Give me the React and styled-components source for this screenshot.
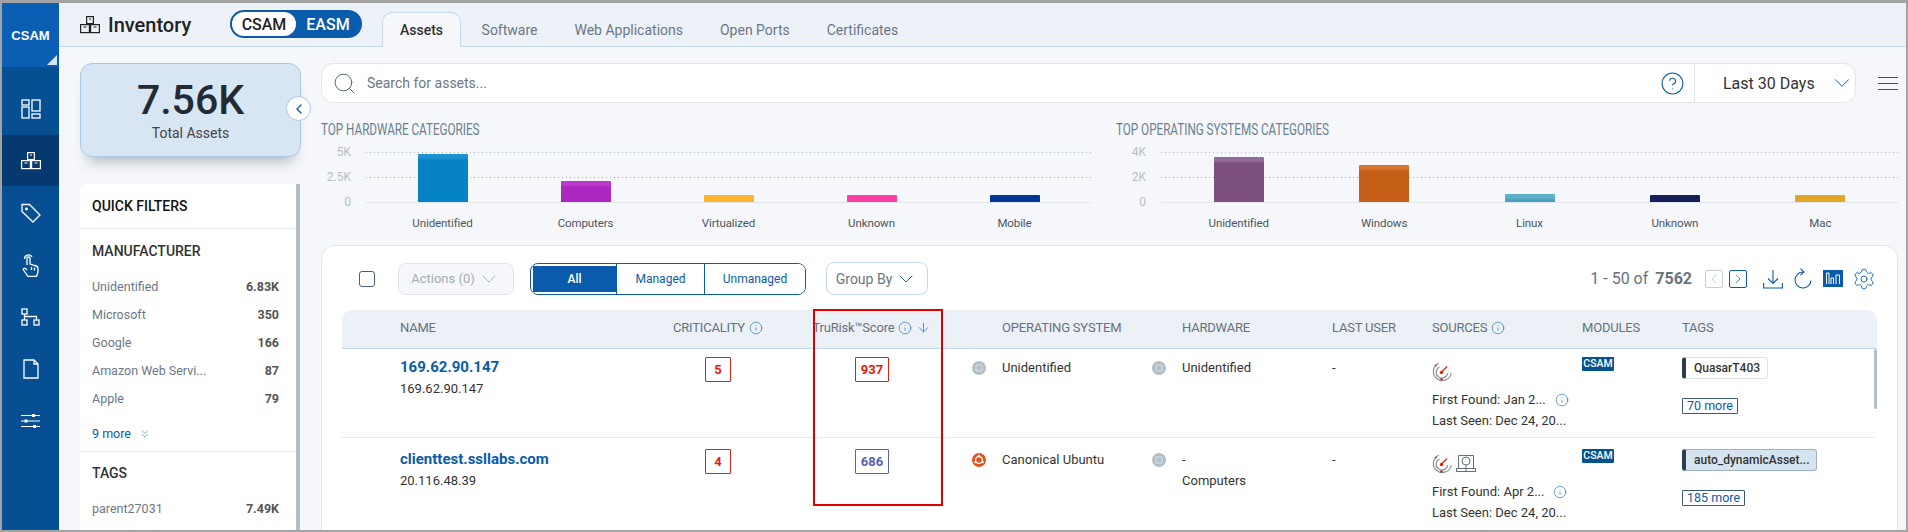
import styled, { createGlobalStyle } from 'styled-components';
import {
  ArrowDown,
  ChevronDown,
  ChevronLeft,
  ChevronRight,
  ChevronsDown,
  CircleHelp,
  Info,
  Search,
  Settings,
} from 'lucide-react';

const GlobalStyle = createGlobalStyle`
  * { box-sizing: border-box; }
  html, body { margin: 0; padding: 0; }
  body { font-family: Roboto, 'Liberation Sans', sans-serif; color: #333; background: #fff; }
`;

const hardware = [
  { label: 'Unidentified', height: 48, color: '#0683c4', top: '#1a92d0' },
  { label: 'Computers', height: 21, color: '#ac28c1', top: '#b93ccc' },
  { label: 'Virtualized', height: 7, color: '#fdb52f', top: '#fdb52f' },
  { label: 'Unknown', height: 7, color: '#ff3ea5', top: '#ff3ea5' },
  { label: 'Mobile', height: 7, color: '#023793', top: '#023793' },
];

const systems = [
  { label: 'Unidentified', height: 45, color: '#7d5080', top: '#946a97' },
  { label: 'Windows', height: 37, color: '#c55f17', top: '#d5732f' },
  { label: 'Linux', height: 8, color: '#4a9fbe', top: '#5fb0cc' },
  { label: 'Unknown', height: 7, color: '#151f59', top: '#151f59' },
  { label: 'Mac', height: 7, color: '#e1a626', top: '#e1a626' },
];

const manufacturers = [
  ['Unidentified', '6.83K'],
  ['Microsoft', '350'],
  ['Google', '166'],
  ['Amazon Web Servi...', '87'],
  ['Apple', '79'],
];

const IconBoxes = () => (
  <svg width='20' height='18' viewBox='0 0 20 18' fill='none' stroke='currentColor' strokeWidth='1.2'>
    <rect x='6.6' y='0.6' width='6.8' height='7' />
    <rect x='0.6' y='8.6' width='8.8' height='8' />
    <rect x='10.6' y='8.6' width='8.8' height='8' />
    <path d='M9 3h2M3.5 11h3M13.5 11h3' />
  </svg>
);

const IconDash = () => (
  <svg width='20' height='20' viewBox='0 0 20 20' fill='none' stroke='currentColor' strokeWidth='1.3'>
    <rect x='1' y='1' width='7' height='5' />
    <rect x='1' y='8' width='7' height='11' />
    <rect x='11' y='1' width='8' height='11' />
    <rect x='11' y='15' width='8' height='4' />
  </svg>
);

const IconTag = () => (
  <svg width='20' height='20' viewBox='0 0 20 20' fill='none' stroke='currentColor' strokeWidth='1.3'>
    <path d='M1 1.5h7.5L19 12l-7 7L1 8.5z' />
    <circle cx='5.5' cy='6' r='0.8' fill='currentColor' />
  </svg>
);

const IconHand = () => (
  <svg width='17' height='23' viewBox='0 0 17 23' fill='none' stroke='currentColor' strokeWidth='1.3'>
    <path d='M5 11V4.5a1.5 1.5 0 0 1 3 0V10l5 1.5c1.5.4 3 1.2 3 3V18l-1.5 4.5H6L1.5 16c-.8-1.2.8-2.5 2-1.5L5 16' />
    <path d='M2.5 5a4 4 0 0 1 7.5-2M9.500 13v3M12.500 13.500v3' />
  </svg>
);

const IconTree = () => (
  <svg width='20' height='18' viewBox='0 0 20 18' fill='none' stroke='currentColor' strokeWidth='1.3'>
    <rect x='1' y='1' width='5' height='5' />
    <rect x='1' y='12' width='5' height='5' />
    <rect x='13' y='12' width='5' height='5' />
    <path d='M3.5 6v6M3.5 8.500h12V12' />
  </svg>
);

const IconFile = () => (
  <svg width='16' height='20' viewBox='0 0 16 20' fill='none' stroke='currentColor' strokeWidth='1.3'>
    <path d='M1 1h10l4 4v14H1zM11 1v4h4' />
  </svg>
);

const IconSliders = () => (
  <svg width='20' height='16' viewBox='0 0 20 16' fill='currentColor' stroke='currentColor' strokeWidth='1'>
    <path d='M0 2.5h19M0 8h19M0 13.5h19' />
    <rect x='11' y='1' width='3' height='3' stroke='none' />
    <rect x='3.5' y='6.5' width='3' height='3' stroke='none' />
    <rect x='12' y='12' width='3' height='3' stroke='none' />
  </svg>
);

const IconRadar = () => (
  <svg width='20' height='20' viewBox='0 0 20 20' fill='none' stroke='#8b949c' strokeWidth='1.2'>
    <path d='M7 1.200A9 9 0 1 0 19.300 11' />
    <path d='M7.500 5A5.800 5.800 0 1 0 15.700 11' />
    <path d='M9.500 10 15 4.500' stroke='#e0200f' strokeWidth='1.2' />
    <circle cx='9.500' cy='10.500' r='1.700' fill='#e0200f' stroke='none' />
    <circle cx='9.500' cy='17.500' r='1.200' fill='#e0200f' stroke='none' />
    <circle cx='3.800' cy='3.500' r='1' fill='#e0200f' stroke='none' />
  </svg>
);

const IconScan = () => (
  <svg width='20' height='20' viewBox='0 0 20 20' fill='none' stroke='#66707a' strokeWidth='1'>
    <path d='M2.500 14.500V1.500h15v13' />
    <circle cx='10' cy='7' r='4' />
    <path d='M10 11v7' />
    <rect x='0.5' y='14.500' width='19' height='3' />
  </svg>
);

const IconDownload = () => (
  <svg width='20' height='20' viewBox='0 0 20 20' fill='none' stroke='currentColor' strokeWidth='1.1'>
    <path d='M10 1v13M5 9.500l5 5 5-5M0.600 14v5h18.800v-5' />
  </svg>
);

const IconRefresh = () => (
  <svg width='18' height='21' viewBox='0 0 18 21' fill='none' stroke='currentColor' strokeWidth='1.1'>
    <path d='M9 4a8 8 0 1 0 8 8.500' />
    <path d='M6.500 0.700 10 4l-3.500 3' />
  </svg>
);

const Gear = styled(Settings)`
  margin: -2px;
`;

const IconGlobe = () => (
  <svg width='14' height='14' viewBox='0 0 14 14'>
    <circle cx='7' cy='7' r='7' fill='#b3bfc6' />
    <path d='M4 4h6v6H4z' fill='none' stroke='#d8dfe3' strokeWidth='1' />
  </svg>
);

const IconUbuntu = () => (
  <svg width='14' height='14' viewBox='0 0 14 14'>
    <circle cx='7' cy='7' r='7' fill='#e2521d' />
    <circle cx='7' cy='7' r='3.4' fill='none' stroke='#fff' strokeWidth='1.2' />
    <circle cx='7' cy='2.6' r='1.1' fill='#fff' />
    <circle cx='3.2' cy='9.2' r='1.1' fill='#fff' />
    <circle cx='10.8' cy='9.2' r='1.1' fill='#fff' />
  </svg>
);

const IconBars = () => (
  <svg width='20' height='17' viewBox='0 0 20 17'>
    <rect width='20' height='17' fill='#0a5bab' />
    <path d='M3.500 14V3h2.500v11M8 14V8h2.500v6M13 14V5h3.500v9' fill='none' stroke='#fff' strokeWidth='1' />
  </svg>
);

const ChartBlock = ({ title, ticks, bars, wide }) => (
  <Chart $wide={wide}>
    <ChartTitle>{title}</ChartTitle>
    <ChartBody>
      <Axis>
        {ticks.map((tick) => (
          <span key={tick}>{tick}</span>
        ))}
      </Axis>
      <Plot>
        <GridLine $top={0} />
        <GridLine $top={25} />
        {bars.map((bar) => (
          <BarSlot key={bar.label}>
            <Bar $height={bar.height} $color={bar.color} $top={bar.top} />
          </BarSlot>
        ))}
      </Plot>
    </ChartBody>
    <Labels>
      {bars.map((bar) => (
        <span key={bar.label}>{bar.label}</span>
      ))}
    </Labels>
  </Chart>
);

const App = () => {
  return (
    <Frame>
      <GlobalStyle />
      <Sidebar>
        <Brand>CSAM</Brand>
        <NavItem $h={68} $pad={16}><IconDash /></NavItem>
        <NavItem $h={51} $active><IconBoxes /></NavItem>
        <NavItem $h={54}><IconTag /></NavItem>
        <NavItem $h={50}><IconHand /></NavItem>
        <NavItem $h={54}><IconTree /></NavItem>
        <NavItem $h={50}><IconFile /></NavItem>
        <NavItem $h={54}><IconSliders /></NavItem>
      </Sidebar>

      <Main>
        <TopBar>
          <PageTitle>
            <IconBoxes />
            <h1>Inventory</h1>
          </PageTitle>
          <Toggle>
            <ToggleOption $on>CSAM</ToggleOption>
            <ToggleOption>EASM</ToggleOption>
          </Toggle>
          <Tabs>
            <Tab $active>Assets</Tab>
            <Tab>Software</Tab>
            <Tab>Web Applications</Tab>
            <Tab>Open Ports</Tab>
            <Tab>Certificates</Tab>
          </Tabs>
        </TopBar>

        <Content>
          <LeftColumn>
            <TotalCard>
              <strong>7.56K</strong>
              <span>Total Assets</span>
              <Collapse>
                <ChevronLeft size={16} strokeWidth={2} />
              </Collapse>
            </TotalCard>

            <FilterPanel>
              <FilterHead>QUICK FILTERS</FilterHead>
              <FilterGroup>
                <GroupTitle>MANUFACTURER</GroupTitle>
                {manufacturers.map(([name, count]) => (
                  <FilterRow key={name}>
                    <span>{name}</span>
                    <b>{count}</b>
                  </FilterRow>
                ))}
                <MoreLink>
                  9 more <ChevronsDown size={12} strokeWidth={1} />
                </MoreLink>
              </FilterGroup>
              <FilterGroup>
                <GroupTitle>TAGS</GroupTitle>
                <FilterRow>
                  <span>parent27031</span>
                  <b>7.49K</b>
                </FilterRow>
              </FilterGroup>
            </FilterPanel>
          </LeftColumn>

          <RightColumn>
            <SearchRow>
              <SearchBox>
                <Search size={25} strokeWidth={0.9} color='#4b5a68' />
                <SearchText>Search for assets...</SearchText>
                <CircleHelp size={25} strokeWidth={1} color='#0a5bab' />
                <DateRange>
                  Last 30 Days
                  <ChevronDown size={26} strokeWidth={0.9} color='#0a5bab' />
                </DateRange>
              </SearchBox>
              <Burger>
                <i />
                <i />
                <i />
              </Burger>
            </SearchRow>

            <Charts>
              <ChartBlock title='TOP HARDWARE CATEGORIES' ticks={['5K', '2.5K', '0']} bars={hardware} />
              <ChartBlock title='TOP OPERATING SYSTEMS CATEGORIES' ticks={['4K', '2K', '0']} bars={systems} wide />
            </Charts>

            <TableCard>
              <Toolbar>
                <Checkbox />
                <ActionsButton>
                  Actions (0) <ChevronDown size={24} strokeWidth={0.9} />
                </ActionsButton>
                <Segments>
                  <Segment $active $width={85}>All</Segment>
                  <Segment $width={88}>Managed</Segment>
                  <Segment>Unmanaged</Segment>
                </Segments>
                <GroupBy>
                  Group By <ChevronDown size={24} strokeWidth={0.9} color='#0a5bab' />
                </GroupBy>
                <Pager>
                  <span>1 - 50 of</span>
                  <b>7562</b>
                  <PageBox $off>
                    <ChevronLeft size={18} strokeWidth={1} />
                  </PageBox>
                  <PageBox>
                    <ChevronRight size={18} strokeWidth={1} />
                  </PageBox>
                  <PagerIcons>
                    <IconDownload />
                    <IconRefresh />
                    <IconBars />
                    <Gear size={24} strokeWidth={0.9} />
                  </PagerIcons>
                </Pager>
              </Toolbar>

              <TableWrap>
                <HeadRow>
                  <HeadCell $indent={58}>NAME</HeadCell>
                  <HeadCell $center>
                    CRITICALITY <Info size={14} strokeWidth={1} color='#0a5bab' />
                  </HeadCell>
                  <HeadCell $center>
                    TruRisk™Score <Info size={14} strokeWidth={1} color='#0a5bab' />
                    <ArrowDown size={15} strokeWidth={1} color='#0a5bab' />
                  </HeadCell>
                  <HeadCell $indent={44}>OPERATING SYSTEM</HeadCell>
                  <HeadCell $indent={44}>HARDWARE</HeadCell>
                  <HeadCell>LAST USER</HeadCell>
                  <HeadCell>
                    SOURCES <Info size={14} strokeWidth={1} color='#0a5bab' />
                  </HeadCell>
                  <HeadCell>MODULES</HeadCell>
                  <HeadCell>TAGS</HeadCell>
                </HeadRow>

                <Row $pad={8}>
                  <NameCell>
                    <a>169.62.90.147</a>
                    <span>169.62.90.147</span>
                  </NameCell>
                  <CenterCell>
                    <Score>5</Score>
                  </CenterCell>
                  <CenterCell>
                    <Score $wide>937</Score>
                  </CenterCell>
                  <IconCell>
                    <IconGlobe />
                    <span>Unidentified</span>
                  </IconCell>
                  <IconCell>
                    <IconGlobe />
                    <span>Unidentified</span>
                  </IconCell>
                  <PlainCell>-</PlainCell>
                  <SourceCell>
                    <SourceIcons>
                      <IconRadar />
                    </SourceIcons>
                    <SourceLine>
                      First Found: Jan 2...
                      <Info size={14} strokeWidth={1} color='#0a5bab' />
                    </SourceLine>
                    <SourceLine>Last Seen: Dec 24, 20...</SourceLine>
                  </SourceCell>
                  <div>
                    <ModuleBadge>CSAM</ModuleBadge>
                  </div>
                  <TagCell>
                    <Tag>QuasarT403</Tag>
                    <More>70 more</More>
                  </TagCell>
                </Row>

                <Row $pad={11} $last>
                  <NameCell>
                    <a>clienttest.ssllabs.com</a>
                    <span>20.116.48.39</span>
                  </NameCell>
                  <CenterCell>
                    <Score>4</Score>
                  </CenterCell>
                  <CenterCell>
                    <Score $wide $purple>686</Score>
                  </CenterCell>
                  <IconCell>
                    <IconUbuntu />
                    <span>Canonical Ubuntu</span>
                  </IconCell>
                  <IconCell>
                    <IconGlobe />
                    <span>
                      -<br />
                      Computers
                    </span>
                  </IconCell>
                  <PlainCell>-</PlainCell>
                  <SourceCell>
                    <SourceIcons>
                      <IconRadar />
                      <IconScan />
                    </SourceIcons>
                    <SourceLine>
                      First Found: Apr 2...
                      <Info size={14} strokeWidth={1} color='#0a5bab' />
                    </SourceLine>
                    <SourceLine>Last Seen: Dec 24, 20...</SourceLine>
                  </SourceCell>
                  <div>
                    <ModuleBadge>CSAM</ModuleBadge>
                  </div>
                  <TagCell>
                    <Tag $tinted>auto_dynamicAsset...</Tag>
                    <More>185 more</More>
                  </TagCell>
                </Row>

                <Highlight />
                <ScrollThumb />
              </TableWrap>
            </TableCard>
          </RightColumn>
        </Content>
      </Main>
    </Frame>
  );
};

const COLUMNS = '308px 136px 172px 180px 194px 100px 150px 100px 1fr';
const condensed = `'Liberation Sans Narrow', Roboto, sans-serif`;

const Frame = styled.div`
  width: 1908px;
  height: 532px;
  display: flex;
  overflow: hidden;
  border: 2px solid #a3a3a3;
  border-top-width: 3px;
  background: #f5f7fa;
`;

const Sidebar = styled.nav`
  width: 57px;
  flex: none;
  background: #064f93;
  color: #fff;
`;

const Brand = styled.div`
  position: relative;
  height: 64px;
  display: flex;
  align-items: center;
  justify-content: center;
  background: #0a5fb4;
  font-family: 'Liberation Sans', sans-serif;
  font-weight: 700;
  font-size: 13px;
  &::after {
    content: '';
    position: absolute;
    right: 2px;
    bottom: 2px;
    border-style: solid;
    border-width: 0 0 10px 10px;
    border-color: transparent transparent #d8e5f3 transparent;
  }
`;

const NavItem = styled.div`
  height: ${(p) => p.$h}px;
  padding-top: ${(p) => p.$pad || 0}px;
  display: flex;
  align-items: center;
  justify-content: center;
  background: ${(p) => (p.$active ? '#06396f' : 'transparent')};
`;

const Main = styled.main`
  flex: 1;
  min-width: 0;
  display: flex;
  flex-direction: column;
`;

const TopBar = styled.header`
  height: 44px;
  flex: none;
  display: flex;
  align-items: flex-end;
  padding-left: 21px;
  background: #edf2f9;
  border-bottom: 1px solid #c5d7ea;
`;

const PageTitle = styled.div`
  width: 150px;
  height: 43px;
  display: flex;
  align-items: center;
  gap: 8px;
  color: #222;
  h1 {
    margin: 0;
    font-size: 20px;
    font-weight: 500;
    color: #222;
  }
`;

const Toggle = styled.div`
  width: 132px;
  height: 28px;
  margin-bottom: 8px;
  padding: 2px;
  display: flex;
  align-items: center;
  border-radius: 14px;
  background: #0a5bab;
`;

const ToggleOption = styled.span`
  width: 65px;
  height: 24px;
  display: flex;
  align-items: center;
  justify-content: center;
  border-radius: 12px;
  font-size: 16px;
  font-weight: 500;
  background: ${(p) => (p.$on ? '#fff' : 'transparent')};
  color: ${(p) => (p.$on ? '#222' : '#fff')};
`;

const Tabs = styled.div`
  margin-left: 20px;
  display: flex;
  align-items: flex-end;
  margin-bottom: -1px;
`;

const Tab = styled.div`
  height: 35px;
  padding: 0 ${(p) => (p.$active ? '17px' : '17.5px')};
  margin-right: ${(p) => (p.$active ? '2px' : '0')};
  display: flex;
  align-items: center;
  font-size: 14px;
  font-weight: ${(p) => (p.$active ? 500 : 400)};
  color: ${(p) => (p.$active ? '#333' : '#6b7785')};
  background: ${(p) => (p.$active ? '#f5f7fa' : 'transparent')};
  border: ${(p) => (p.$active ? '1px solid #c5d7ea' : '1px solid transparent')};
  border-bottom: ${(p) => (p.$active ? '1px solid #f5f7fa' : '1px solid transparent')};
  border-radius: 10px 10px 0 0;
`;

const Content = styled.div`
  flex: 1;
  min-height: 0;
  display: flex;
  gap: 20px;
  padding: 16px 8px 0 21px;
`;

const LeftColumn = styled.div`
  width: 221px;
  flex: none;
  display: flex;
  flex-direction: column;
  gap: 27px;
`;

const TotalCard = styled.div`
  position: relative;
  height: 94px;
  flex: none;
  display: flex;
  flex-direction: column;
  align-items: center;
  background: #d8e5f3;
  border: 1px solid #a9c8e8;
  border-radius: 12px;
  box-shadow: 0 12px 14px -8px rgba(70, 80, 90, 0.4);
  strong {
    font-size: 41px;
    font-weight: 500;
    line-height: 48px;
    margin-top: 12px;
    color: #222b33;
  }
  span {
    font-size: 14px;
    line-height: 18px;
    color: #444;
  }
`;

const Collapse = styled.div`
  position: absolute;
  top: 32px;
  right: -11px;
  width: 25px;
  height: 25px;
  display: flex;
  align-items: center;
  justify-content: center;
  border-radius: 50%;
  background: #fff;
  border: 1px solid #a9c8e8;
  color: #0a5bab;
`;

const FilterPanel = styled.aside`
  flex: 1;
  min-height: 0;
  overflow: hidden;
  background: #fff;
  border-right: 4px solid #b0bec9;
  border-radius: 6px 0 0 0;
  width: 220px;
`;

const FilterHead = styled.div`
  height: 45px;
  display: flex;
  align-items: center;
  padding-left: 12px;
  font-size: 14px;
  font-weight: 500;
  color: #111;
  border-bottom: 1px solid #e4e8ec;
`;

const FilterGroup = styled.div`
  padding: 12px 17px 0 12px;
  & + & {
    padding-top: 11px;
    border-top: 1px solid #e4e8ec;
  }
`;

const GroupTitle = styled.div`
  height: 20px;
  line-height: 20px;
  font-size: 14px;
  font-weight: 500;
  color: #333;
  margin-bottom: 11px;
`;

const FilterRow = styled.div`
  height: 28px;
  display: flex;
  align-items: center;
  justify-content: space-between;
  font-size: 12.5px;
  color: #6b7785;
  b {
    font-weight: 700;
    color: #555;
  }
`;

const MoreLink = styled.div`
  height: 39px;
  display: flex;
  align-items: center;
  gap: 8px;
  font-size: 12.5px;
  color: #0a5bab;
  padding-top: 4px;
`;

const RightColumn = styled.div`
  flex: 1;
  min-width: 0;
  display: flex;
  flex-direction: column;
`;

const SearchRow = styled.div`
  height: 40px;
  flex: none;
  display: flex;
  align-items: center;
`;

const SearchBox = styled.div`
  width: 1535px;
  height: 40px;
  display: flex;
  align-items: center;
  padding-left: 10px;
  background: #fff;
  border: 1px solid #e2e6ea;
  border-radius: 12px;
`;

const SearchText = styled.span`
  flex: 1;
  margin-left: 10px;
  font-size: 14px;
  color: #6b7785;
`;

const DateRange = styled.div`
  width: 161px;
  height: 38px;
  margin-left: 9px;
  display: flex;
  align-items: center;
  justify-content: space-between;
  padding: 0 0 0 28px;
  border-left: 1px solid #e2e6ea;
  font-size: 16px;
  color: #333;
`;

const Burger = styled.div`
  width: 20px;
  margin-left: 22px;
  display: flex;
  flex-direction: column;
  gap: 5px;
  i {
    display: block;
    height: 1px;
    background: #0a5bab;
  }
`;

const Charts = styled.div`
  height: 142px;
  flex: none;
  display: flex;
  gap: 25px;
`;

const Chart = styled.section`
  width: ${(p) => (p.$wide ? '782px' : '770px')};
  flex: none;
`;

const ChartTitle = styled.h2`
  margin: 17px 0 12px;
  height: 20px;
  line-height: 20px;
  font-family: ${condensed};
  font-size: 16px;
  font-weight: 400;
  white-space: nowrap;
  color: #6a7f90;
  transform: scaleX(0.73);
  transform-origin: left center;
`;

const ChartBody = styled.div`
  display: flex;
`;

const Axis = styled.div`
  width: 30px;
  margin-right: 15px;
  height: 50px;
  display: flex;
  flex-direction: column;
  justify-content: space-between;
  align-items: flex-end;
  font-size: 12px;
  color: #b6bfc6;
  span {
    line-height: 0;
  }
`;

const Plot = styled.div`
  position: relative;
  flex: 1;
  height: 51px;
  display: flex;
  padding: 0 5px;
  border-bottom: 1px solid #e3e7ea;
`;

const GridLine = styled.div`
  position: absolute;
  left: 0;
  right: 0;
  top: ${(p) => p.$top}px;
  height: 1px;
  background: repeating-linear-gradient(90deg, #a4b5ba 0 1px, transparent 1px 4px);
`;

const BarSlot = styled.div`
  position: relative;
  flex: 1;
  display: flex;
  justify-content: center;
  align-items: flex-end;
`;

const Bar = styled.div`
  width: 50px;
  height: ${(p) => p.$height}px;
  background: linear-gradient(${(p) => p.$top} 4px, ${(p) => p.$color} 6px);
  border-radius: 1px 1px 0 0;
`;

const Labels = styled.div`
  display: flex;
  margin: 12px 0 0 45px;
  padding: 0 5px;
  span {
    flex: 1;
    text-align: center;
    font-size: 11.5px;
    letter-spacing: -0.1px;
    line-height: 16px;
    color: #4a5660;
  }
`;

const TableCard = styled.section`
  flex: 1;
  min-height: 0;
  background: #fff;
  border: 1px solid #e2e6ea;
  border-bottom: 0;
  border-radius: 14px 14px 0 0;
  padding: 16px 20px 0;
`;

const Toolbar = styled.div`
  height: 33px;
  display: flex;
  align-items: center;
  padding-left: 17px;
`;

const Checkbox = styled.span`
  width: 16px;
  height: 16px;
  border: 1px solid #4a6274;
  border-radius: 3px;
`;

const ActionsButton = styled.div`
  width: 116px;
  height: 32px;
  margin-left: 23px;
  display: flex;
  align-items: center;
  justify-content: center;
  gap: 2px;
  background: #f5f7fa;
  border: 1px solid #e0e4e8;
  border-radius: 8px;
  font-size: 13px;
  color: #a3adb6;
`;

const Segments = styled.div`
  width: 276px;
  height: 32px;
  margin-left: 16px;
  display: flex;
  border: 1px solid #0a5bab;
  border-radius: 8px;
  overflow: hidden;
`;

const Segment = styled.div`
  flex: ${(p) => (p.$width ? `0 0 ${p.$width}px` : '1')};
  display: flex;
  align-items: center;
  justify-content: center;
  font-size: 12px;
  font-weight: ${(p) => (p.$active ? 500 : 400)};
  color: ${(p) => (p.$active ? '#fff' : '#0a5bab')};
  background: ${(p) => (p.$active ? '#0a5bab' : '#fff')};
  border: ${(p) => (p.$active ? '2px solid #fff' : 0)};
  border-right: 0;
  & + & {
    border-left: 1px solid #0a5bab;
  }
`;

const GroupBy = styled.div`
  width: 102px;
  height: 33px;
  margin-left: 20px;
  display: flex;
  align-items: center;
  justify-content: center;
  gap: 2px;
  border: 1px solid #c5d7ea;
  border-radius: 8px;
  font-size: 14px;
  color: #6b7785;
`;

const Pager = styled.div`
  margin-left: auto;
  padding-right: 3px;
  display: flex;
  align-items: center;
  font-size: 16px;
  color: #66727d;
  b {
    margin-left: 7px;
    font-weight: 700;
  }
`;

const PageBox = styled.span`
  width: 18px;
  height: 18px;
  display: flex;
  align-items: center;
  justify-content: center;
  margin-left: ${(p) => (p.$off ? '13px' : '6px')};
  border: 1px solid ${(p) => (p.$off ? '#c3ced8' : '#0a5bab')};
  color: ${(p) => (p.$off ? '#a5b3c0' : '#0a5bab')};
  border-radius: 2px;
`;

const PagerIcons = styled.div`
  margin-left: 16px;
  display: flex;
  align-items: center;
  gap: 11px;
  color: #0a5bab;
`;

const TableWrap = styled.div`
  position: relative;
  margin-top: 15px;
`;

const HeadRow = styled.div`
  height: 39px;
  padding-bottom: 3px;
  display: grid;
  grid-template-columns: ${COLUMNS};
  align-items: center;
  background: #ecf1f8;
  border-bottom: 1px solid #c5d7ea;
  border-radius: 10px 10px 0 0;
`;

const HeadCell = styled.div`
  display: flex;
  align-items: center;
  justify-content: ${(p) => (p.$center ? 'center' : 'flex-start')};
  gap: 4px;
  padding-left: ${(p) => p.$indent || 0}px;
  font-family: ${condensed};
  font-size: 13px;
  letter-spacing: -0.2px;
  color: #66727d;
`;

const Row = styled.div`
  height: 89px;
  display: grid;
  grid-template-columns: ${COLUMNS};
  padding-top: ${(p) => p.$pad}px;
  margin-right: 3px;
  border-bottom: ${(p) => (p.$last ? '0' : '1px solid #e6eaee')};
`;

const NameCell = styled.div`
  padding-left: 58px;
  display: flex;
  flex-direction: column;
  a {
    font-size: 15px;
    font-weight: 700;
    line-height: 20px;
    color: #0a5bab;
  }
  span {
    margin-top: 3px;
    font-size: 13px;
    line-height: 18px;
    color: #333;
  }
`;

const CenterCell = styled.div`
  display: flex;
  justify-content: center;
`;

const Score = styled.div`
  width: ${(p) => (p.$wide ? '34px' : '26px')};
  height: 25px;
  display: flex;
  align-items: center;
  justify-content: center;
  font-size: 13px;
  font-weight: 700;
  color: ${(p) => (p.$purple ? '#5a5fb0' : '#e0200f')};
  border: 1px solid ${(p) => (p.$purple ? '#5a5fb0' : '#e0200f')};
  border-radius: 1px;
`;

const IconCell = styled.div`
  display: flex;
  gap: 16px;
  padding-left: 14px;
  font-size: 13px;
  line-height: 21px;
  color: #333;
  svg {
    margin-top: 4px;
    flex: none;
  }
`;

const PlainCell = styled.div`
  font-size: 13px;
  line-height: 21px;
`;

const SourceCell = styled.div`
  display: flex;
  flex-direction: column;
`;

const SourceIcons = styled.div`
  height: 32px;
  padding-top: 5px;
  display: flex;
  gap: 4px;
`;

const SourceLine = styled.div`
  height: 21px;
  display: flex;
  align-items: center;
  gap: 9px;
  font-size: 13px;
  white-space: nowrap;
  color: #333;
`;

const ModuleBadge = styled.span`
  display: inline-block;
  width: 32px;
  height: 14px;
  line-height: 14px;
  text-align: center;
  background: #05528f;
  color: #fff;
  font-size: 10.5px;
  font-weight: 500;
  vertical-align: top;
  border-radius: 1px;
`;

const TagCell = styled.div`
  display: flex;
  flex-direction: column;
  align-items: flex-start;
`;

const Tag = styled.div`
  height: 22px;
  display: flex;
  align-items: center;
  padding: 0 7px 0 8px;
  font-size: 12px;
  font-weight: 500;
  color: #333;
  background: ${(p) => (p.$tinted ? '#d6e4f2' : '#fff')};
  border: 1px solid ${(p) => (p.$tinted ? '#9fb2c4' : '#dde2e6')};
  border-left: 4px solid #2c3e50;
  border-radius: 3px;
`;

const More = styled.div`
  margin-top: 19px;
  height: 16px;
  line-height: 14px;
  padding: 0 4px;
  font-size: 12.5px;
  color: #0a5bab;
  border: 1px solid #3c5a78;
  border-radius: 1px;
`;

const Highlight = styled.div`
  position: absolute;
  top: -1px;
  left: 471px;
  width: 130px;
  height: 197px;
  border: 2px solid #e00000;
  pointer-events: none;
`;

const ScrollThumb = styled.div`
  position: absolute;
  top: 39px;
  right: 0;
  width: 3px;
  height: 60px;
  border-radius: 2px;
  background: #b4bfca;
`;

export default App;
